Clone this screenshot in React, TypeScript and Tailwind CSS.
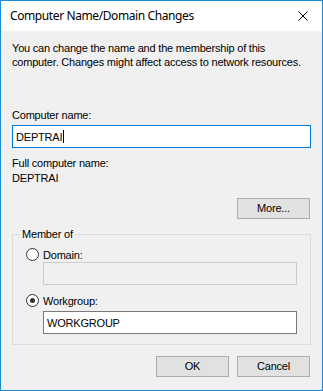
import React from "react";

const ui = { fontFamily: '"Liberation Sans", Arial, sans-serif' };
const title = { fontFamily: '"Noto Sans", "Open Sans", sans-serif' };

function Radio({ checked }: { checked?: boolean }) {
  return (
    <span className="w-[13px] h-[13px] rounded-full border border-[#333333] bg-white flex items-center justify-center shrink-0">
      {checked && <span className="w-[5px] h-[5px] rounded-full bg-[#333333]" />}
    </span>
  );
}

function Button({ children }: { children: React.ReactNode }) {
  return (
    <div className="w-[73px] h-[21px] bg-[#e1e1e1] border border-[#adadad] flex items-center justify-center text-[11px] text-black leading-none">
      {children}
    </div>
  );
}

export default function App() {
  return (
    <div className="w-[323px] h-[391px] border border-[#1a89d8] bg-[#f0f0f0] flex flex-col text-black tracking-[-0.2px]" style={ui}>
      <div className="h-[30px] bg-white flex items-center justify-between pl-[9px] pr-[14px] shrink-0">
        <span className="text-[12px] leading-none tracking-[-0.4px]" style={title}>Computer Name/Domain Changes</span>
        <svg width="10" height="10" viewBox="0 0 10 10" className="block">
          <path d="M0.5 0.5 L9.5 9.5 M9.5 0.5 L0.5 9.5" stroke="#000" strokeWidth="1" fill="none" />
        </svg>
      </div>
      <div className="flex flex-col px-[11px] text-[11px] leading-[14px]">
        <p className="mt-[10px]">
          You can change the name and the membership of this
          <br />
          computer. Changes might affect access to network resources.
        </p>
        <div className="mt-[39px]">Computer name:</div>
        <div className="mt-[3px] h-[23px] border border-[#0078d7] bg-white flex items-center pl-[3px]">
          <span>DEPTRAI</span>
          <span className="w-[1px] h-[13px] bg-black ml-[1px]" />
        </div>
        <div className="mt-[8px]">Full computer name:</div>
        <div className="mt-[1px]">DEPTRAI</div>
        <div className="mt-[13px] self-end mr-[1px]">
          <Button>More...</Button>
        </div>
        <div className="relative mt-[15px] border border-[#dcdcdc] pt-[13px] pb-[10px] pl-[13px] pr-[13px]">
          <span className="absolute left-[7px] top-[-8px] px-[2px] bg-[#f0f0f0]">Member of</span>
          <div className="flex items-center gap-[4px] h-[13px]">
            <Radio />
            <span>Domain:</span>
          </div>
          <div className="mt-[1px] ml-[17px] h-[23px] border border-[#cccccc] bg-[#f0f0f0]" />
          <div className="mt-[9px] flex items-center gap-[4px] h-[13px]">
            <Radio checked />
            <span>Workgroup:</span>
          </div>
          <div className="mt-[4px] ml-[17px] h-[23px] border border-[#7a7a7a] bg-white flex items-center pl-[3px]">
            WORKGROUP
          </div>
        </div>
        <div className="mt-[11px] flex justify-end gap-[8px] mr-[1px]">
          <Button>OK</Button>
          <Button>Cancel</Button>
        </div>
      </div>
    </div>
  );
}
